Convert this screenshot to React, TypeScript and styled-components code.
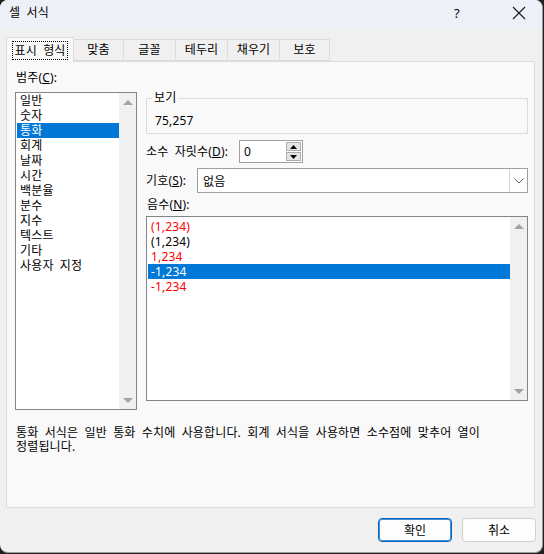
import React from "react";
import styled, { createGlobalStyle } from "styled-components";

const GlobalStyle = createGlobalStyle`
	html, body {
		margin: 0;
		padding: 0;
		background: #202020;
	}
	body {
		font-family: "Noto Sans", "Noto Sans CJK KR", sans-serif;
		font-size: 12px;
		word-spacing: 3px;
		letter-spacing: 0.15px;
		color: #000;
	}
`;

const categories = ["일반", "숫자", "통화", "회계", "날짜", "시간", "백분율", "분수", "지수", "텍스트", "기타", "사용자 지정"];

const negatives = [
	{ text: "(1,234)", red: true },
	{ text: "(1,234)", red: false },
	{ text: "1,234", red: true },
	{ text: "-1,234", red: false, selected: true },
	{ text: "-1,234", red: true },
];

const tabs = [
	{ label: "표시 형식", width: 68 },
	{ label: "맞춤", width: 50 },
	{ label: "글꼴", width: 52 },
	{ label: "테두리", width: 52 },
	{ label: "채우기", width: 52 },
	{ label: "보호", width: 50 },
];

function App() {
	return (
		<>
			<GlobalStyle />
			<Window>
				<TitleBar>
					<Title>셀 서식</Title>
					<HelpMark>?</HelpMark>
					<CloseButton>
						<svg width="14" height="14" viewBox="0 0 14 14">
							<path d="M1 1 L13 13 M13 1 L1 13" stroke="#1a1a1a" strokeWidth="1.1" fill="none" />
						</svg>
					</CloseButton>
				</TitleBar>

				<TabStrip>
					{tabs.map((t, i) => (
						<Tab key={t.label} $active={i === 0} $width={t.width}>
							{i === 0 ? <FocusBox>{t.label}</FocusBox> : t.label}
						</Tab>
					))}
				</TabStrip>

				<Panel>
					<LeftColumn>
						<FieldLabel>
							범주(<u>C</u>):
						</FieldLabel>
						<ListBox $height={318}>
							<ListItems>
								{categories.map((c) => (
									<ListItem key={c} $selected={c === "통화"}>
										{c}
									</ListItem>
								))}
							</ListItems>
							<ScrollTrack>
								<Arrow $up />
								<Arrow />
							</ScrollTrack>
						</ListBox>
					</LeftColumn>

					<RightColumn>
						<Preview>
							<legend>보기</legend>
							<PreviewValue>75,257</PreviewValue>
						</Preview>

						<Row $top={6}>
							<RowLabel $width={93}>
								소수 자릿수(<u>D</u>):
							</RowLabel>
							<SpinBox>
								<SpinValue>0</SpinValue>
								<SpinButtons>
									<SpinButton>
										<svg width="7" height="4" viewBox="0 0 7 4">
											<path d="M0 4 L3.5 0 L7 4 Z" fill="#000" />
										</svg>
									</SpinButton>
									<SpinButton>
										<svg width="7" height="4" viewBox="0 0 7 4">
											<path d="M0 0 L3.5 4 L7 0 Z" fill="#000" />
										</svg>
									</SpinButton>
								</SpinButtons>
							</SpinBox>
						</Row>

						<Row $top={5}>
							<RowLabel $width={51}>
								기호(<u>S</u>):
							</RowLabel>
							<Select>
								<SelectValue>없음</SelectValue>
								<DropButton>
									<svg width="10" height="6" viewBox="0 0 10 6">
										<path d="M0.5 0.5 L5 5 L9.5 0.5" stroke="#606060" strokeWidth="1" fill="none" />
									</svg>
								</DropButton>
							</Select>
						</Row>

						<FieldLabel $top={4} $bottom={3}>
							음수(<u>N</u>):
						</FieldLabel>
						<ListBox $height={185}>
							<ListItems $padTop={2}>
								{negatives.map((n, i) => (
									<ListItem key={i} $selected={n.selected} $red={n.red}>
										{n.text}
									</ListItem>
								))}
							</ListItems>
							<ScrollTrack>
								<Arrow $up />
								<Arrow />
							</ScrollTrack>
						</ListBox>
					</RightColumn>

					<Description>
						통화 서식은 일반 통화 수치에 사용합니다. 회계 서식을 사용하면 소수점에 맞추어 열이
						<br />
						정렬됩니다.
					</Description>
				</Panel>

				<Footer>
					<DialogButton $primary>확인</DialogButton>
					<DialogButton>취소</DialogButton>
				</Footer>
			</Window>
		</>
	);
}

export default App;

const Window = styled.div`
	width: 543px;
	height: 553px;
	box-sizing: border-box;
	background: #f0f0f0;
	border-radius: 8px;
	border-right: 1px solid #9c9c9c;
	border-bottom: 1px solid #9c9c9c;
	overflow: hidden;
	display: flex;
	flex-direction: column;
`;

const TitleBar = styled.div`
	height: 29px;
	flex-shrink: 0;
	background: #eef0f7;
	display: flex;
	align-items: center;
	padding-left: 9px;
`;

const Title = styled.div`
	flex: 1;
	font-size: 12px;
	line-height: 16px;
	margin-top: -3px;
`;

const HelpMark = styled.div`
	width: 20px;
	text-align: center;
	font-size: 13px;
	margin-right: 29px;
	margin-top: -3px;
`;

const CloseButton = styled.div`
	width: 46px;
	height: 29px;
	display: flex;
	align-items: center;
	justify-content: center;
	margin-top: -3px;
`;

const TabStrip = styled.div`
	display: flex;
	align-items: flex-end;
	height: 24px;
	margin-top: 8px;
	padding-left: 6px;
	position: relative;
	z-index: 1;
`;

const Tab = styled.div<{ $active?: boolean; $width: number }>`
	width: ${(p) => p.$width}px;
	height: ${(p) => (p.$active ? 25 : 22)}px;
	box-sizing: border-box;
	display: flex;
	align-items: center;
	justify-content: center;
	background: ${(p) => (p.$active ? "#f9f9f9" : "#f0f0f0")};
	border: 1px solid #dcdcdc;
	border-bottom: ${(p) => (p.$active ? "none" : "1px solid #dcdcdc")};
	border-left: ${(p) => (p.$active ? "1px solid #dcdcdc" : "none")};
	margin-bottom: ${(p) => (p.$active ? -1 : 0)}px;
	font-size: 12px;
	line-height: 16px;
	white-space: nowrap;
	padding-top: ${(p) => (p.$active ? 1 : 0)}px;
`;

const FocusBox = styled.span`
	border: 1px dotted #000;
	padding: 1px 1px;
	line-height: 15px;
`;

const Panel = styled.div`
	height: 447px;
	margin: 0 7px 0 6px;
	box-sizing: border-box;
	background: #f9f9f9;
	border: 1px solid #dcdcdc;
	display: grid;
	grid-template-columns: 122px 382px;
	grid-template-rows: auto 1fr;
	column-gap: 9px;
	align-content: start;
	padding: 8px 0 0 8px;
`;

const LeftColumn = styled.div`
	display: flex;
	flex-direction: column;
`;

const RightColumn = styled.div`
	display: flex;
	flex-direction: column;
	padding-top: 22px;
`;

const FieldLabel = styled.div<{ $top?: number; $bottom?: number }>`
	line-height: 16px;
	height: 16px;
	margin-top: ${(p) => p.$top ?? 0}px;
	margin-bottom: ${(p) => p.$bottom ?? 6}px;
	padding-left: 1px;
`;

const ListBox = styled.div<{ $height: number }>`
	height: ${(p) => p.$height}px;
	box-sizing: border-box;
	border: 1px solid #82858c;
	background: #fff;
	display: flex;
`;

const ListItems = styled.div<{ $padTop?: number }>`
	flex: 1;
	padding: ${(p) => p.$padTop ?? 0}px 0 0 1px;
`;

const ListItem = styled.div<{ $selected?: boolean; $red?: boolean }>`
	height: 15px;
	line-height: 15px;
	padding-left: 3px;
	white-space: nowrap;
	background: ${(p) => (p.$selected ? "#0078d7" : "transparent")};
	color: ${(p) => (p.$selected ? "#fff" : p.$red ? "#ff0000" : "#000")};
`;

const ScrollTrack = styled.div`
	width: 17px;
	background: #f0f0f0;
	display: flex;
	flex-direction: column;
	justify-content: space-between;
	align-items: center;
	padding: 7px 0 6px;
`;

const Arrow = styled.div<{ $up?: boolean }>`
	width: 0;
	height: 0;
	border-left: 5px solid transparent;
	border-right: 5px solid transparent;
	${(p) => (p.$up ? "border-bottom: 5px solid #a3a3a3;" : "border-top: 5px solid #a3a3a3;")}
`;

const Preview = styled.fieldset`
	margin: 0;
	height: 42px;
	box-sizing: border-box;
	border: 1px solid #dcdcdc;
	padding: 0 0 0 8px;
	min-width: 0;

	legend {
		padding: 0 2px;
		margin-left: -3px;
		font-size: 12px;
		line-height: 12px;
	}
`;

const PreviewValue = styled.div`
	line-height: 16px;
	padding-top: 9px;
`;

const Row = styled.div<{ $top: number }>`
	display: flex;
	align-items: center;
	margin-top: ${(p) => p.$top}px;
`;

const RowLabel = styled.div<{ $width: number }>`
	width: ${(p) => p.$width}px;
	line-height: 16px;
	white-space: nowrap;
`;

const SpinBox = styled.div`
	width: 64px;
	height: 23px;
	box-sizing: border-box;
	border: 1px solid #a0a0a0;
	background: #fff;
	display: flex;
	align-items: center;
`;

const SpinValue = styled.div`
	flex: 1;
	padding-left: 4px;
	line-height: 16px;
`;

const SpinButtons = styled.div`
	display: flex;
	flex-direction: column;
	gap: 1px;
	margin-right: 1px;
`;

const SpinButton = styled.div`
	width: 15px;
	height: 9px;
	box-sizing: border-box;
	border: 1px solid #adadad;
	background: #e5e5e5;
	display: flex;
	align-items: center;
	justify-content: center;
`;

const Select = styled.div`
	width: 331px;
	height: 25px;
	box-sizing: border-box;
	border: 1px solid #a0a0a0;
	background: #fff;
	display: flex;
	align-items: stretch;
`;

const SelectValue = styled.div`
	flex: 1;
	display: flex;
	align-items: center;
	padding-left: 5px;
`;

const DropButton = styled.div`
	width: 17px;
	border-left: 1px solid #d4d4d4;
	display: flex;
	align-items: center;
	justify-content: center;
`;

const Description = styled.div`
	grid-column: 1 / span 2;
	margin-top: 16px;
	padding-left: 1px;
	line-height: 14px;
	white-space: nowrap;
`;

const Footer = styled.div`
	display: flex;
	justify-content: flex-end;
	gap: 10px;
	padding: 10px 6px 0 0;
`;

const DialogButton = styled.button<{ $primary?: boolean }>`
	width: 74px;
	height: 24px;
	box-sizing: border-box;
	border-radius: 4px;
	background: #fdfdfd;
	border: 1px solid ${(p) => (p.$primary ? "#0067c0" : "#d0d0d0")};
	box-shadow: ${(p) => (p.$primary ? "inset 0 0 0 1px #4a90d0" : "none")};
	font-family: "Noto Sans", "Noto Sans CJK KR", sans-serif;
	font-size: 12px;
	color: #000;
	padding: 0;
`;
